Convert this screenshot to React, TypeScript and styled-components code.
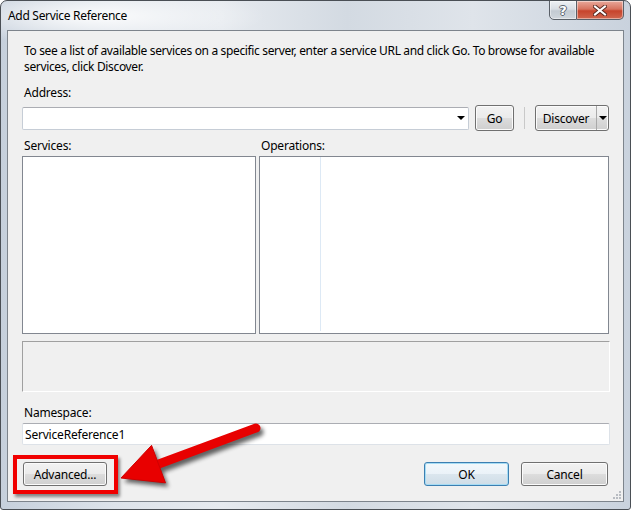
import styled, { createGlobalStyle } from 'styled-components';

const GlobalStyle = createGlobalStyle`
  html, body {
    margin: 0;
    padding: 0;
    background: #ffffff;
  }
  body {
    font-family: "Noto Sans", "DejaVu Sans", sans-serif;
    font-size: 12px;
    color: #000;
  }
`;

const Window = styled.div`
  position: relative;
  width: 631px;
  height: 510px;
  box-sizing: border-box;
  display: flex;
  flex-direction: column;
  border: 1px solid #4a4f55;
  border-radius: 7px 7px 3px 3px;
  background:
    radial-gradient(ellipse 170px 28px at 95px 15px, rgba(255, 255, 255, 0.9), rgba(255, 255, 255, 0) 100%),
    linear-gradient(to right, #c6d0dc 0%, #dde3ea 18%, #e6eaef 35%, #d3dae2 55%, #dfe4ea 75%, #c9d2dd 100%);
  overflow: hidden;
`;

const TitleBar = styled.div`
  height: 29px;
  display: flex;
  align-items: flex-start;
  flex-shrink: 0;
`;

const Title = styled.div`
  padding: 7px 0 0 7px;
  font-size: 12px;
  line-height: 16px;
  color: #000;
  letter-spacing: -0.3px;
`;

const Caption = styled.div`
  margin-left: auto;
  margin-right: 6px;
  display: flex;
  margin-top: -1px;
`;

const CaptionButton = styled.div<{ $close?: boolean }>`
  width: ${({ $close }) => ($close ? '47px' : '28px')};
  height: 20px;
  box-sizing: border-box;
  border: 1px solid #5a6068;
  border-left-width: ${({ $close }) => ($close ? '0' : '1px')};
  border-radius: ${({ $close }) => ($close ? '0 0 5px 0' : '0 0 0 5px')};
  display: flex;
  align-items: center;
  justify-content: center;
  background: ${({ $close }) =>
    $close
      ? 'linear-gradient(to bottom, #e9a99b 0%, #d7735f 45%, #c7442c 55%, #d0664e 100%)'
      : 'linear-gradient(to bottom, #eef1f4 0%, #d9dee4 45%, #c3cad2 55%, #d0d6dd 100%)'};
  box-shadow: inset 0 0 0 1px rgba(255, 255, 255, 0.45);
`;

const HelpGlyph = styled.span`
  font-family: "DejaVu Sans", sans-serif;
  font-weight: bold;
  font-size: 13px;
  line-height: 1;
  color: #ffffff;
  text-shadow: 1px 0 0 #5b6570, -1px 0 0 #5b6570, 0 1px 0 #5b6570, 0 -1px 0 #5b6570;
`;

const Client = styled.div`
  margin: 0 6px 0 6px;
  border: 1px solid #7d848c;
  background: #f0f0f0;
  padding: 12px 13px 15px 14px;
  height: 472px;
  box-sizing: border-box;
  position: relative;
  display: flex;
  flex-direction: column;
`;

const Description = styled.div`
  padding-left: 2px;
  line-height: 16px;
  white-space: nowrap;
  letter-spacing: -0.35px;
`;

const Label = styled.div<{ $top: number }>`
  margin-top: ${({ $top }) => $top}px;
  padding-left: 2px;
  line-height: 15px;
  letter-spacing: -0.2px;
`;

const AddressRow = styled.div`
  margin-top: 5px;
  height: 26px;
  display: flex;
  align-items: center;
`;

const Combo = styled.div`
  width: 447px;
  height: 23px;
  box-sizing: border-box;
  background: #fff;
  border: 1px solid #c6cdd6;
  border-top-color: #abadb3;
  border-radius: 2px;
  display: flex;
  align-items: center;
  justify-content: flex-end;
  padding-right: 3px;
`;

const ComboArrow = styled.span`
  width: 0;
  height: 0;
  border-left: 4px solid transparent;
  border-right: 4px solid transparent;
  border-top: 4px solid #000;
`;

const Button = styled.div<{ $w: number; $default?: boolean }>`
  width: ${({ $w }) => $w}px;
  height: 24px;
  box-sizing: border-box;
  border: 1px solid ${({ $default }) => ($default ? '#3c7fb1' : '#707070')};
  border-radius: 3px;
  background: ${({ $default }) =>
    $default
      ? 'linear-gradient(to bottom, #f3f8fb 0%, #eaf2f8 50%, #dbe6ee 50%, #cfdde7 100%)'
      : 'linear-gradient(to bottom, #f2f2f2 0%, #ebebeb 50%, #dddddd 50%, #cfcfcf 100%)'};
  box-shadow: inset 0 0 0 1px ${({ $default }) => ($default ? '#a6dcf4' : '#fbfbfb')};
  display: flex;
  align-items: center;
  justify-content: center;
  line-height: 15px;
  flex-shrink: 0;
  letter-spacing: -0.2px;
`;

const TallButton = styled(Button)`
  height: 26px;
`;

const Separator = styled.div`
  width: 1px;
  height: 22px;
  background: #c9c9c9;
  margin: 0 10px 0 10px;
`;

const SplitButton = styled.div`
  width: 74px;
  height: 26px;
  box-sizing: border-box;
  border: 1px solid #707070;
  border-radius: 3px;
  background: linear-gradient(to bottom, #f2f2f2 0%, #ebebeb 50%, #dddddd 50%, #cfcfcf 100%);
  box-shadow: inset 0 0 0 1px #fbfbfb;
  display: flex;
  align-items: stretch;
`;

const SplitMain = styled.div`
  flex: 1;
  display: flex;
  align-items: center;
  justify-content: center;
  border-right: 1px solid #a9a9a9;
  letter-spacing: -0.2px;
`;

const SplitArrow = styled.div`
  width: 11px;
  display: flex;
  align-items: center;
  justify-content: center;
`;

const Columns = styled.div`
  display: flex;
  gap: 3px;
`;

const Column = styled.div<{ $w: number }>`
  width: ${({ $w }) => $w}px;
  display: flex;
  flex-direction: column;
`;

const ListBox = styled.div`
  margin-top: 3px;
  height: 178px;
  box-sizing: border-box;
  background: #fff;
  border: 1px solid #828790;
  display: flex;
`;

const OpsGutter = styled.div`
  width: 60px;
  border-right: 1px solid #dde9f5;
  margin-bottom: 2px;
`;

const StatusBox = styled.div`
  margin-top: 7px;
  height: 51px;
  box-sizing: border-box;
  border: 1px solid #ffffff;
  border-top-color: #a0a0a0;
  border-left-color: #a0a0a0;
  background: #f0f0f0;
`;

const TextInput = styled.div`
  margin-top: 3px;
  height: 22px;
  box-sizing: border-box;
  background: #fff;
  border: 1px solid #dde2e8;
  border-top-color: #abadb3;
  border-radius: 2px;
  padding: 0 0 0 2px;
  display: flex;
  align-items: center;
  letter-spacing: -0.2px;
`;

const ButtonRow = styled.div`
  margin-top: 17px;
  height: 24px;
  display: flex;
  align-items: center;
`;

const Highlight = styled.div`
  margin: -7px 0 -8px -9px;
  padding: 3px 7px 4px 6px;
  border: 4px solid #f00000;
  box-shadow: 2px 3px 3px rgba(0, 0, 0, 0.45);
`;

const Spacer = styled.div`
  flex: 1;
`;

const Grip = styled.svg`
  position: absolute;
  right: 1px;
  bottom: 1px;
`;

const Overlay = styled.svg`
  position: absolute;
  left: -1px;
  top: -1px;
  pointer-events: none;
`;

function Arrow() {
  const tip = [121, 478];
  const tail = [256, 428];
  const dx = tail[0] - tip[0];
  const dy = tail[1] - tip[1];
  const len = Math.hypot(dx, dy);
  const u = [dx / len, dy / len];
  const n = [-u[1], u[0]];
  const headLen = 40;
  const headHalf = 20;
  const base = [tip[0] + u[0] * headLen, tip[1] + u[1] * headLen];
  const head = [
    tip,
    [base[0] + n[0] * headHalf, base[1] + n[1] * headHalf],
    [base[0] - n[0] * headHalf, base[1] - n[1] * headHalf],
  ]
    .map((p) => p.join(','))
    .join(' ');
  const start = [base[0] - u[0] * 4, base[1] - u[1] * 4];
  return (
    <Overlay width={631} height={510} viewBox="0 0 631 510">
      <defs>
        <filter id="shadow" x="-20%" y="-20%" width="140%" height="140%">
          <feGaussianBlur stdDeviation="2" />
        </filter>
      </defs>
      <g transform="translate(3,4)" filter="url(#shadow)" opacity="0.6">
        <line x1={start[0]} y1={start[1]} x2={tail[0]} y2={tail[1]} stroke="#000" strokeWidth={9} strokeLinecap="round" />
        <polygon points={head} fill="#000" />
      </g>
      <line x1={start[0]} y1={start[1]} x2={tail[0]} y2={tail[1]} stroke="#e80000" strokeWidth={9} strokeLinecap="round" />
      <polygon points={head} fill="#e80000" stroke="#d00000" strokeWidth={1} strokeLinejoin="round" />
    </Overlay>
  );
}

export default function App() {
  return (
    <>
      <GlobalStyle />
      <Window>
        <TitleBar>
          <Title>Add Service Reference</Title>
          <Caption>
            <CaptionButton>
              <HelpGlyph>?</HelpGlyph>
            </CaptionButton>
            <CaptionButton $close>
              <svg width="14" height="11" viewBox="0 0 14 11">
                <path d="M2 1.5 L12 9.5 M12 1.5 L2 9.5" stroke="#5a2a22" strokeWidth="4" strokeLinecap="square" />
                <path d="M2 1.5 L12 9.5 M12 1.5 L2 9.5" stroke="#ffffff" strokeWidth="2" strokeLinecap="square" />
              </svg>
            </CaptionButton>
          </Caption>
        </TitleBar>
        <Client>
          <Description>
            To see a list of available services on a specific server, enter a service URL and click Go. To browse for available
            <br />
            services, click Discover.
          </Description>
          <Label $top={10}>Address:</Label>
          <AddressRow>
            <Combo>
              <ComboArrow />
            </Combo>
            <TallButton $w={39} style={{ marginLeft: 6 }}>
              Go
            </TallButton>
            <Separator />
            <SplitButton>
              <SplitMain>Discover</SplitMain>
              <SplitArrow>
                <ComboArrow />
              </SplitArrow>
            </SplitButton>
          </AddressRow>
          <Columns>
            <Column $w={234}>
              <Label $top={7}>Services:</Label>
              <ListBox />
            </Column>
            <Column $w={350}>
              <Label $top={7}>Operations:</Label>
              <ListBox>
                <OpsGutter />
              </ListBox>
            </Column>
          </Columns>
          <StatusBox />
          <Label $top={13}>Namespace:</Label>
          <TextInput>ServiceReference1</TextInput>
          <ButtonRow>
            <Highlight>
              <Button $w={84}>Advanced...</Button>
            </Highlight>
            <Spacer />
            <Button $w={85} $default>
              OK
            </Button>
            <Button $w={87} style={{ marginLeft: 12, marginRight: 2 }}>
              Cancel
            </Button>
          </ButtonRow>
          <Grip width="10" height="10" viewBox="0 0 10 10">
            {[
              [8, 2],
              [5, 5],
              [8, 5],
              [2, 8],
              [5, 8],
              [8, 8],
            ].map(([x, y]) => (
              <rect key={`${x}-${y}`} x={x - 1} y={y - 1} width={2} height={2} fill="#b8bcc2" />
            ))}
          </Grip>
        </Client>
        <Arrow />
      </Window>
    </>
  );
}
